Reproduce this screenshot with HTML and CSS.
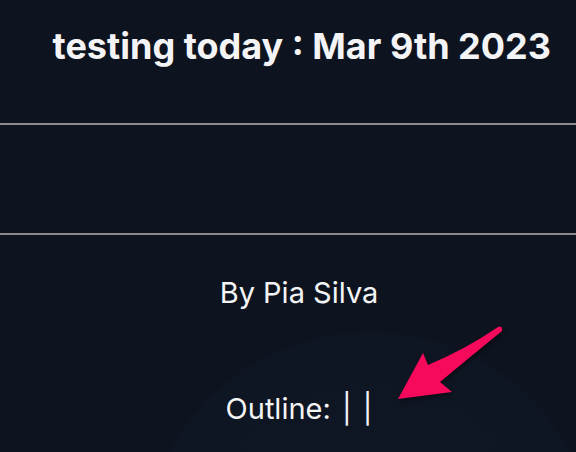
FILE: index.html
```html
<!DOCTYPE html>
<html lang="en">
<head>
    <meta charset="UTF-8">
    <meta name="viewport" content="width=device-width, initial-scale=1.0">
    <title>Testing today</title>
    <link rel="stylesheet" href="styles.css">
</head>
<body>

    <div class="page">
        <header class="title-bar">
            <h1>testing today : Mar 9th 2023</h1>
        </header>
        <hr class="divider">
        <div class="blank"></div>
        <hr class="divider">
        <p class="byline">By Pia Silva</p>
        <p class="outline">Outline: | |</p>

        <svg class="arrow" width="130" height="90" viewBox="390 320 130 90">
            <path d="M398 399 L423 353 L428 365 Q466 349 498 327 Q503 325 502 331 Q470 357 440 382 L452 392 Z" fill="#f70a5c"/>
        </svg>
    </div>

</body>
</html>
```

FILE: styles.css
```css
body {
    margin: 0;
    padding: 0;
    background-color: #0d1420;
    font-family: Inter, "Noto Sans", sans-serif;
    color: #f4f4f6;
}

.page {
    position: relative;
    height: 452px;
    overflow: hidden;
    background: radial-gradient(circle at 370px 560px, #101724 0, #0f1623 226px, #0d1420 230px);
}

.title-bar {
    height: 123px;
    box-sizing: border-box;
    padding: 22px 25px 0 0;
    text-align: right;
}

h1 {
    margin: 0;
    font-size: 36px;
    font-weight: 700;
    line-height: 48px;
}

.divider {
    margin: 0;
    border: none;
    height: 2px;
    background-color: #8a8a8a;
}

.blank {
    height: 108px;
}

.byline,
.outline {
    margin: 0;
    padding-left: 22px;
    text-align: center;
    font-size: 29px;
    line-height: 36px;
}

.byline {
    margin-top: 40px;
}

.outline {
    margin-top: 80px;
    word-spacing: 3px;
}

.arrow {
    position: absolute;
    left: 390px;
    top: 320px;
    filter: drop-shadow(1px 2px 2px rgba(0, 0, 0, 0.5));
}
```
